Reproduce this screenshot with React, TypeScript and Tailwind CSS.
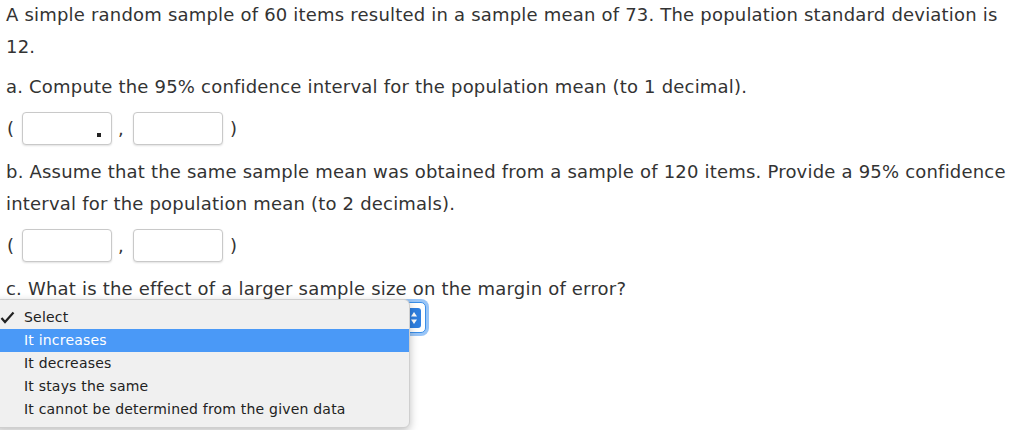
import { useState } from "react";

const options = [
  "Select",
  "It increases",
  "It decreases",
  "It stays the same",
  "It cannot be determined from the given data",
];

function AnswerBox({ dot }: { dot?: boolean }) {
  return (
    <div className="relative h-[33px] w-[90px] rounded-[4px] border border-[#c9c9c9] bg-white shadow-[0_1px_2px_rgba(0,0,0,0.12)]">
      {dot && (
        <span className="absolute bottom-[7px] right-[10px] h-[4px] w-[4px] bg-[#222]" />
      )}
    </div>
  );
}

function IntervalRow({ dot }: { dot?: boolean }) {
  return (
    <div className="flex h-[33px] items-center">
      <span className="w-[16px] pl-[1px]">(</span>
      <AnswerBox dot={dot} />
      <span className="w-[21px] pl-[6px]">,</span>
      <AnswerBox />
      <span className="pl-[7px]">)</span>
    </div>
  );
}

export default function App() {
  const [selected] = useState(1);

  return (
    <div className="relative h-[430px] w-[1024px] overflow-hidden bg-white pl-[6px] font-['DejaVu_Sans',Verdana,sans-serif] text-[18px] leading-[32px] tracking-[0.2px] text-[#333]">
      <div className="-mt-[1px] w-[1010px]">
        <p>
          A simple random sample of 60 items resulted in a sample mean of 73.
          The population standard deviation is 12.
        </p>
        <p className="mt-[8px]">
          a. Compute the 95% confidence interval for the population mean (to 1
          decimal).
        </p>
        <div className="mt-[9px]">
          <IntervalRow dot />
        </div>
        <p className="mt-[11px]">
          b. Assume that the same sample mean was obtained from a sample of 120
          items. Provide a 95% confidence interval for the population mean (to
          2 decimals).
        </p>
        <div className="mt-[9px]">
          <IntervalRow />
        </div>
        <p className="mt-[11px]">
          c. What is the effect of a larger sample size on the margin of error?
        </p>
      </div>

      {/* native select sitting behind the open list */}
      <div className="absolute left-[6px] top-[302px] flex h-[31px] w-[420px] items-center justify-end rounded-[5px] border border-[#3b8fe8] bg-white pr-[4px] shadow-[0_0_0_3px_rgba(70,150,240,0.55)]">
        <div className="flex h-[20px] w-[14px] items-center justify-center rounded-[3px] bg-[#2f7fe0]">
          <svg width="8" height="14" viewBox="0 0 8 14">
            <path d="M4 1 L7 5.5 H1 Z" fill="white" />
            <path d="M4 13 L7 8.5 H1 Z" fill="white" />
          </svg>
        </div>
      </div>

      {/* open option list */}
      <div className="absolute left-[-6px] top-[299px] w-[416px] rounded-[6px] border border-[#cfcfcf] bg-[#f0f0f0] py-[6px] font-['DejaVu_Sans',Verdana,sans-serif] text-[14px] leading-[23px] text-[#222] shadow-[0_3px_8px_rgba(0,0,0,0.25)]">
        {options.map((opt, i) => (
          <div
            key={opt}
            className={`relative h-[23px] pl-[29px] ${
              i === selected ? "bg-[#4a99f7] text-white" : ""
            }`}
          >
            {i === 0 && (
              <svg
                className="absolute left-[5px] top-[5px]"
                width="15"
                height="13"
                viewBox="0 0 15 13"
              >
                <path
                  d="M1.5 7 L5 11 L13.5 1.5"
                  fill="none"
                  stroke="#222"
                  strokeWidth="2.2"
                />
              </svg>
            )}
            {opt}
          </div>
        ))}
      </div>
    </div>
  );
}
